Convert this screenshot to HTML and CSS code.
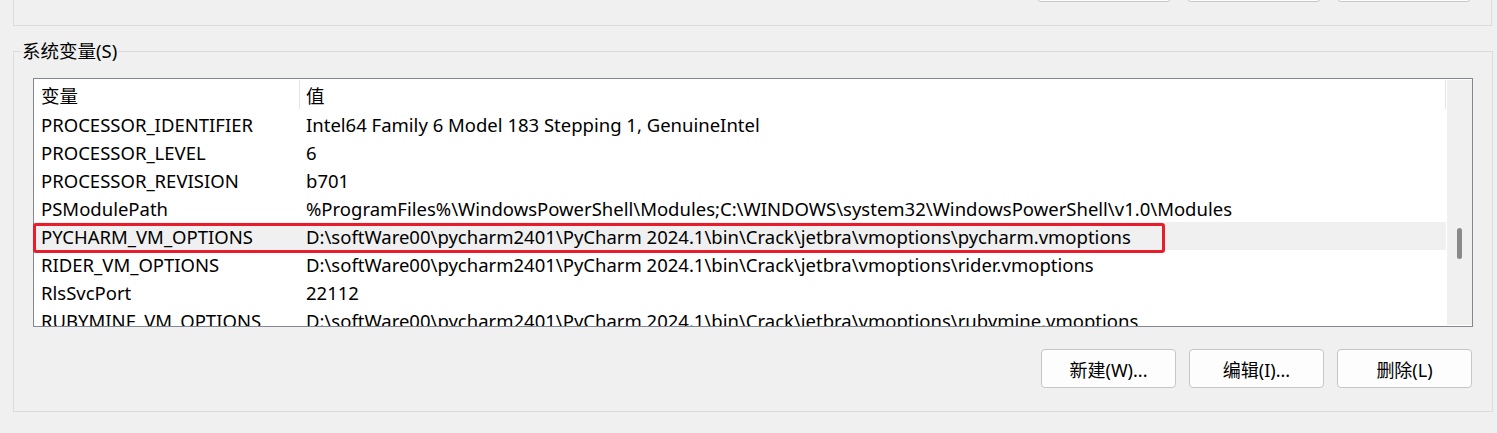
FILE: index.html
```html
<!DOCTYPE html>
<html lang="zh-CN">
<head>
    <meta charset="UTF-8">
    <meta name="viewport" content="width=device-width, initial-scale=1.0">
    <title>环境变量</title>
    <link rel="stylesheet" href="styles.css">
</head>
<body>
    <div class="envDialog">
        <!-- 用户变量 (上面只露出底边) -->
        <div class="userGroup">
            <div class="groupButtons">
                <button type="button" class="dlgBtn topBtn" aria-label="新建"></button>
                <button type="button" class="dlgBtn topBtn" aria-label="编辑"></button>
                <button type="button" class="dlgBtn topBtn" aria-label="删除"></button>
            </div>
        </div>

        <fieldset class="sysGroup">
            <legend>系统变量(S)</legend>
            <div class="varList">
                <div class="varTable">
                    <div class="varHeader">
                        <span class="colName">变量</span>
                        <span class="colValue">值</span>
                    </div>
                    <div class="varRow"><span class="colName">PROCESSOR_IDENTIFIER</span><span class="colValue">Intel64 Family 6 Model 183 Stepping 1, GenuineIntel</span></div>
                    <div class="varRow"><span class="colName">PROCESSOR_LEVEL</span><span class="colValue">6</span></div>
                    <div class="varRow"><span class="colName">PROCESSOR_REVISION</span><span class="colValue">b701</span></div>
                    <div class="varRow"><span class="colName">PSModulePath</span><span class="colValue">%ProgramFiles%\WindowsPowerShell\Modules;C:\WINDOWS\system32\WindowsPowerShell\v1.0\Modules</span></div>
                    <div class="varRow selected"><span class="colName">PYCHARM_VM_OPTIONS</span><span class="colValue">D:\softWare00\pycharm2401\PyCharm 2024.1\bin\Crack\jetbra\vmoptions\pycharm.vmoptions</span></div>
                    <div class="varRow"><span class="colName">RIDER_VM_OPTIONS</span><span class="colValue">D:\softWare00\pycharm2401\PyCharm 2024.1\bin\Crack\jetbra\vmoptions\rider.vmoptions</span></div>
                    <div class="varRow"><span class="colName">RlsSvcPort</span><span class="colValue">22112</span></div>
                    <div class="varRow"><span class="colName">RUBYMINE_VM_OPTIONS</span><span class="colValue">D:\softWare00\pycharm2401\PyCharm 2024.1\bin\Crack\jetbra\vmoptions\rubymine.vmoptions</span></div>
                </div>
                <div class="scrollTrack">
                    <div class="scrollThumb"></div>
                </div>
                <!-- 红色标记框 -->
                <div class="markBox"></div>
            </div>
            <div class="sysButtons">
                <button type="button" class="dlgBtn">新建(W)...</button>
                <button type="button" class="dlgBtn">编辑(I)...</button>
                <button type="button" class="dlgBtn">删除(L)</button>
            </div>
        </fieldset>
    </div>
</body>
</html>
```

FILE: styles.css
```css
body {
    margin: 0;
    background: #f0f0f0;
    font-family: "Noto Sans", "Noto Sans CJK SC", sans-serif;
    font-size: 18.5px;
    color: #000;
}

.envDialog {
    padding: 0 5px 0 13px;
    height: 433px;
    overflow: hidden;
}

/* 上面的分组, 只看到底边 */
.userGroup {
    display: flow-root;
    height: 25px;
    border: 1px solid #dcdcdc;
    border-top: none;
}
.groupButtons {
    display: flex;
    justify-content: flex-end;
    gap: 16px;
    padding-right: 20px;
    margin-top: -37px;
}

.dlgBtn {
    width: 135px;
    height: 39px;
    background: #fdfdfd;
    border: 1px solid #c6c6c6;
    border-radius: 4px;
    font-family: inherit;
    font-size: 18px;
    color: #000;
    padding: 0;
}
.topBtn {
    width: 134px;
}

.sysGroup {
    margin: 13px 0 0 0;
    padding: 0 19px 23px 19px;
    border: 1px solid #dcdcdc;
    width: 1440px;
}
.sysGroup legend {
    padding: 0 1px;
    margin-left: -12px;
    line-height: 24px;
}

.varList {
    position: relative;
    display: flex;
    height: 247px;
    margin-top: 15px;
    border: 1px solid #828790;
    background: #fff;
}
.varTable {
    flex: 1;
    overflow: hidden;
}
.varHeader, .varRow {
    display: grid;
    grid-template-columns: 266px 1fr;
    align-items: center;
}
.varHeader {
    height: 31px;
}
.varHeader .colName,
.varHeader .colValue {
    align-self: stretch;
    display: flex;
    align-items: center;
    border-right: 1px solid #e5e5e5;
    margin: 1px 0;
}
.varRow {
    height: 28px;
    white-space: nowrap;
}
.colName {
    padding-left: 7px;
}
.colValue {
    padding-left: 6px;
}
.varRow.selected {
    background: #f0f0f0;
}

.scrollTrack {
    width: 25px;
    margin: 1px 0 1px 1px;
    background: #f0f0f0;
    position: relative;
}
.scrollThumb {
    position: absolute;
    left: 10px;
    top: 148px;
    width: 5px;
    height: 31px;
    border-radius: 3px;
    background: #8a8a8a;
}

.markBox {
    position: absolute;
    left: -1px;
    top: 144px;
    width: 1132px;
    height: 30px;
    box-sizing: border-box;
    border: 3px solid #e81c2a;
    border-radius: 3px;
}

.sysButtons {
    display: flex;
    justify-content: flex-end;
    gap: 13px;
    margin-top: 22px;
    padding-right: 1px;
}
```
